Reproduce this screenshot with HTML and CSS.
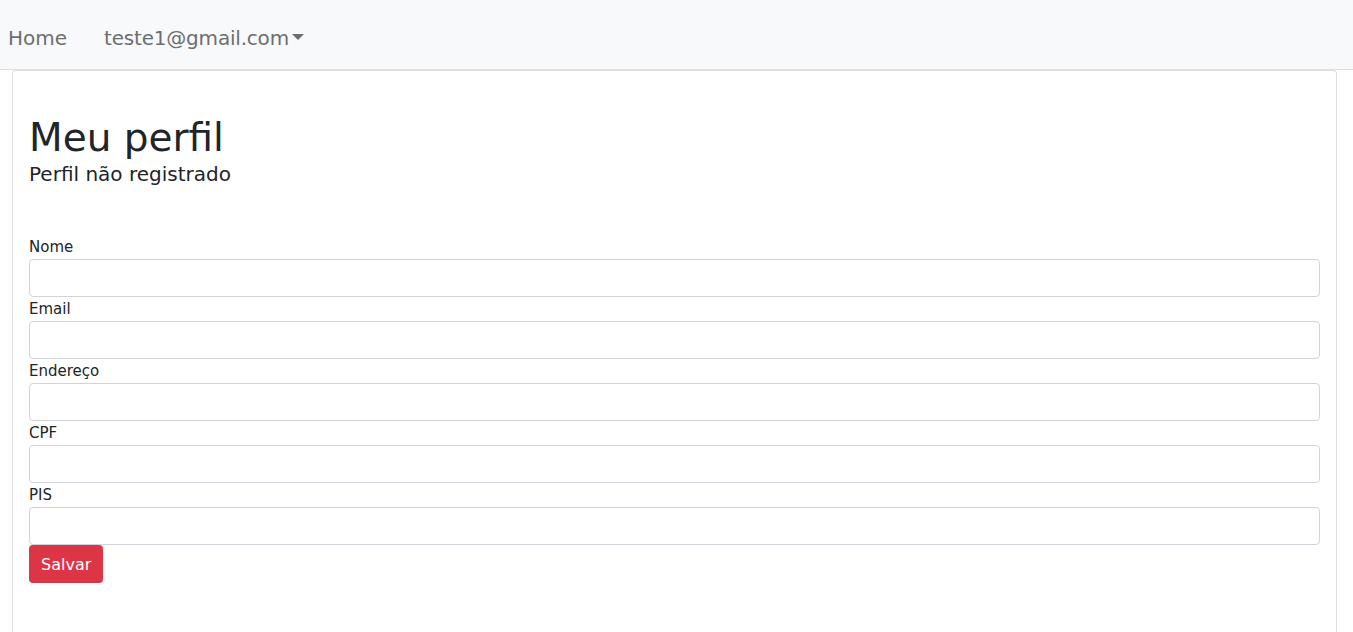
FILE: index.html
```html
<!DOCTYPE html>
<html lang="pt-BR">
<head>
    <meta charset="UTF-8">
    <meta name="viewport" content="width=device-width, initial-scale=1.0">
    <title>Meu perfil</title>
    <link rel="stylesheet" href="styles.css">
</head>
<body>

<nav class="navbar">
    <a class="nav-link" href="#">Home</a>
    <a class="nav-link dropdown-toggle" href="#">teste1@gmail.com</a>
</nav>

<div class="page">
    <div class="card">
        <div class="card-body">
            <h1>Meu perfil</h1>
            <p class="subtitle">Perfil não registrado</p>

            <!-- Formulário do perfil -->
            <form class="profile-form">
                <div class="form-group">
                    <label for="nome">Nome</label>
                    <input type="text" id="nome">
                </div>
                <div class="form-group">
                    <label for="email">Email</label>
                    <input type="text" id="email">
                </div>
                <div class="form-group">
                    <label for="endereco">Endereço</label>
                    <input type="text" id="endereco">
                </div>
                <div class="form-group">
                    <label for="cpf">CPF</label>
                    <input type="text" id="cpf">
                </div>
                <div class="form-group">
                    <label for="pis">PIS</label>
                    <input type="text" id="pis">
                </div>
                <button type="button" class="btn btn-danger">Salvar</button>
            </form>
        </div>
    </div>
</div>

</body>
</html>
```

FILE: styles.css
```css
* {
    box-sizing: border-box;
    font-family: "DejaVu Sans", "Open Sans", sans-serif;
}

html, body {
    margin: 0;
    padding: 0;
    height: 100%;
    overflow: hidden;
}

body {
    background-color: #ffffff;
    color: #212529;
}

/* Barra de navegação */
.navbar {
    display: flex;
    align-items: center;
    gap: 37px;
    height: 70px;
    padding: 0 8px;
    background-color: #f8f9fa;
    border-bottom: 1px solid #dedede;
}

.nav-link {
    font-size: 20px;
    color: #6d6e6f;
    text-decoration: none;
    padding-top: 6px;
}

.nav-link.dropdown-toggle {
    letter-spacing: -0.2px;
}

.dropdown-toggle::after {
    content: "";
    display: inline-block;
    margin-left: 3px;
    vertical-align: 5px;
    border-top: 6px solid #6d6e6f;
    border-left: 6px solid transparent;
    border-right: 6px solid transparent;
}

/* Cartão do perfil */
.page {
    padding: 0 16px 0 12px;
}

.card {
    border: 1px solid #dfdfdf;
    border-bottom: none;
    border-radius: 4px 4px 0 0;
    height: 600px;
}

.card-body {
    padding: 43px 16px 16px;
}

h1 {
    font-size: 39px;
    font-weight: 400;
    line-height: 48px;
    margin: 0;
}

.subtitle {
    font-size: 20px;
    line-height: 24px;
    margin: 0 0 49px;
}

.form-group label {
    display: block;
    font-size: 15px;
    line-height: 24px;
}

.form-group input {
    display: block;
    width: 100%;
    height: 38px;
    border: 1px solid #ced4da;
    border-radius: 4px;
    background-color: #fff;
    font-size: 16px;
    padding: 6px 12px;
}

.btn {
    height: 38px;
    padding: 0 12px;
    font-size: 16px;
    border: none;
    border-radius: 4px;
    color: #fff;
    cursor: pointer;
}

.btn-danger {
    background-color: #dc3545;
}
```
